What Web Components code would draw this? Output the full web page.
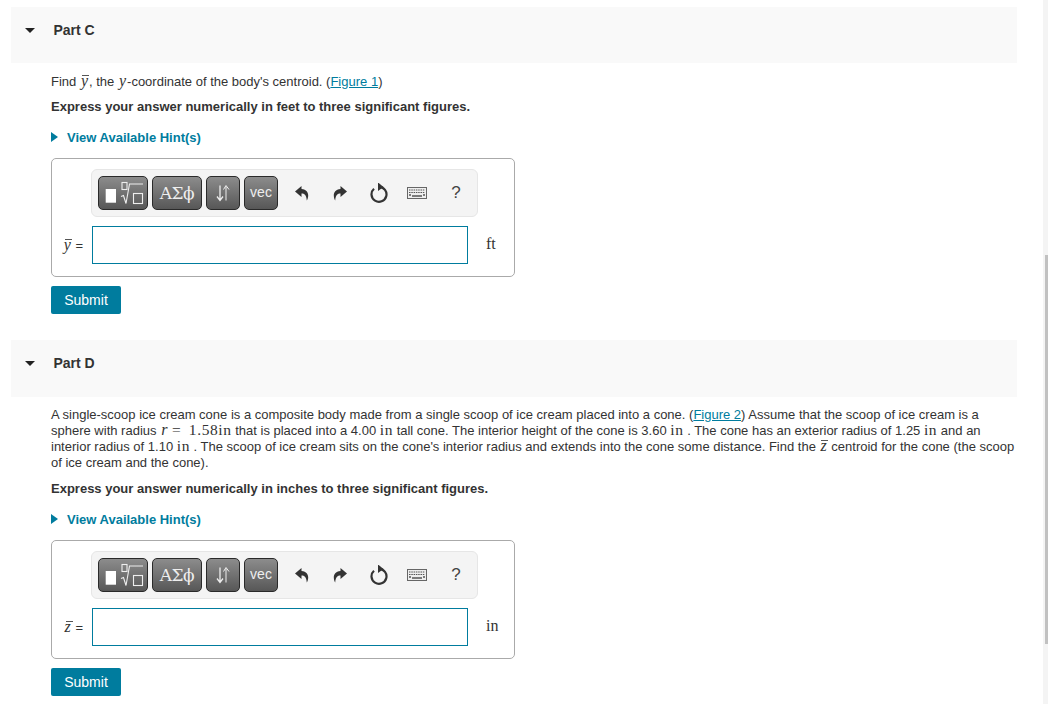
<!DOCTYPE html>
<html>
<head>
<meta charset="utf-8">
<title>Parts</title>
<style>
  html, body { margin: 0; height: 704px; overflow: hidden; background: #fff; }
  body { font-family: "Liberation Sans", Arial, sans-serif; font-size: 13px; color: #333; }
  .page { height: 704px; padding: 7px 0 0 11px; box-sizing: border-box; }
  m-i { font-family: "Liberation Serif", serif; font-style: italic; font-size: 16px; line-height: 0; padding: 0 1px; }
  a { color: #007c9e; }
  .q { line-height: 16px; margin-bottom: 10px; }
</style>
</head>
<body>
<page-scrollbar></page-scrollbar>
<div class="page">
  <part-section name="Part C" style="--gap-after: 26px">
    <div slot="question" class="q" style="margin-bottom:9px">Find <bar-var>y</bar-var>, the <m-i>y</m-i>-coordinate of the body's centroid. (<a href="#">Figure 1</a>)</div>
    <span slot="instruction">Express your answer numerically in feet to three significant figures.</span>
    <bar-var slot="var">y</bar-var>
    <span slot="unit">ft</span>
  </part-section>
  <part-section name="Part D" style="--band-h: 57px; --body-top: 10px">
    <div slot="question" class="q">A single-scoop ice cream cone is a composite body made from a single scoop of ice cream placed into a cone. (<a href="#">Figure 2</a>) Assume that the scoop of ice cream is a<br>sphere with radius <m-i>r</m-i> <unit-txt style="word-spacing:3px">= 1.58in</unit-txt> that is placed into a 4.00 <unit-txt>in</unit-txt> tall cone. The interior height of the cone is 3.60 <unit-txt>in</unit-txt> . The cone has an exterior radius of 1.25 <unit-txt>in</unit-txt> and an<br>interior radius of 1.10 <unit-txt>in</unit-txt> . The scoop of ice cream sits on the cone's interior radius and extends into the cone some distance. Find the <bar-var>z</bar-var> centroid for the cone (the scoop<br>of ice cream and the cone).</div>
    <span slot="instruction">Express your answer numerically in inches to three significant figures.</span>
    <bar-var slot="var">z</bar-var>
    <span slot="unit">in</span>
  </part-section>
</div>

<script>
function define(name, html) {
  customElements.define(name, class extends HTMLElement {
    constructor() {
      super();
      this.attachShadow({ mode: 'open' }).innerHTML = html;
    }
  });
}

// The bar is laid over the letter, it takes no room of its own.
define('bar-var', `
  <style>
    :host { display: inline; position: relative; line-height: 0; font-family: "Liberation Serif", serif; font-style: italic; font-size: 16px; padding: 0 1px; }
    i { position: absolute; left: 2px; width: 7px; top: 3px; height: 1px; background: #555; }
  </style>
  <i></i><slot></slot>`);

define('unit-txt', `
  <style>
    :host { display: inline; font-family: "Liberation Serif", serif; font-size: 15.5px; letter-spacing: .6px; line-height: 0; }
  </style>
  <slot></slot>`);

define('page-scrollbar', `
  <style>
    :host { position: fixed; top: 0; right: 0; width: 5px; height: 704px; background: #f4f4f4; }
    div { position: absolute; top: 255px; left: 2px; right: 0; height: 389px; background: #c1c1c1; }
  </style>
  <div></div>`);

define('hint-link', `
  <style>
    :host { display: flex; align-items: center; gap: 9px; height: 16px; color: #007c9e; font-weight: bold; }
    i { width: 0; height: 0; border-left: 7px solid #007c9e; border-top: 5px solid transparent; border-bottom: 5px solid transparent; }
  </style>
  <i></i><span>View Available Hint(s)</span>`);

define('submit-button', `
  <style>
    :host { display: inline-flex; align-items: center; justify-content: center; width: 70px; height: 28px; background: #007c9e; color: #fff; font-size: 14px; border-radius: 2px; }
  </style>
  <span>Submit</span>`);

define('math-toolbar', `
  <style>
    :host { display: flex; align-items: center; box-sizing: border-box; width: 387px; height: 48px; padding-left: 6px; background: #f4f4f4; border: 1px solid #e6e6e6; border-radius: 6px; }
    .k { display: flex; align-items: center; justify-content: center; box-sizing: border-box; height: 34px; border: 1px solid #2a2a2a; border-radius: 5px; background: linear-gradient(#8c8c8c, #575757); color: #eee; margin-right: 4px; }
    .tmpl { width: 50px; }
    .greek { width: 50px; font: 17px "DejaVu Serif", "Liberation Serif", serif; letter-spacing: -.5px; }
    .arrows { width: 34px; }
    .vec { width: 34px; font: 14px "Liberation Sans", sans-serif; padding-bottom: 3px; }
    svg { display: block; }
    .tool { display: flex; align-items: center; justify-content: center; color: #333; }
    .q { font-size: 17px; color: #444; }
  </style>
  <div class="k tmpl">
    <svg width="44" height="30" viewBox="0 0 44 30" fill="none" stroke="#eee" stroke-width="1.100">
      <rect x="4.700" y="11" width="10.300" height="13.700" fill="#fff" stroke="none"/>
      <rect x="21" y="4.500" width="5" height="7"/>
      <path d="M20 18.500l2.500-1 2.500 8 3.500-19.500h13.500"/>
      <rect x="32.500" y="15.500" width="9" height="10"/>
    </svg>
  </div>
  <div class="k greek">ΑΣϕ</div>
  <div class="k arrows">
    <svg width="20" height="20" viewBox="0 0 20 20" fill="none" stroke="#eee" stroke-width="1.300">
      <path d="M7 2.500v14M4 13.500l3 4 3-4"/>
      <path d="M13 17.500v-14M10.500 6.500l2.500-4 3 4" stroke-width="1"/>
    </svg>
  </div>
  <div class="k vec">vec</div>
  <div class="tool" style="width:14px;margin-left:13px">
    <svg width="14" height="16" viewBox="0 0 14 16" fill="#333"><path d="M6.500 1L0 6.500l6.500 5.500V8.500c3 0 4.800 1.500 5.300 7 2.200-4 2.700-10.500-5.300-11.500z"/></svg>
  </div>
  <div class="tool" style="width:14px;margin-left:24px">
    <svg width="14" height="16" viewBox="0 0 14 16" fill="#333"><path d="M7.500 1L14 6.500 7.500 12V8.500c-3 0-4.800 1.500-5.300 7C0 11.500-.5 5 7.500 4z"/></svg>
  </div>
  <div class="tool" style="width:18px;margin-left:23px">
    <svg width="18" height="20" viewBox="0 0 18 20" fill="none" stroke="#333" stroke-width="2.200"><path d="M9 3.800A7.500 7.500 0 1 1 4 5.700"/><path d="M8 -.5l5.500 4.400L8 8z" fill="#333" stroke="none"/></svg>
  </div>
  <div class="tool" style="width:20px;margin-left:19px">
    <svg width="20" height="12" viewBox="0 0 20 12"><rect x=".5" y=".5" width="19" height="11" fill="#eee" stroke="#666"/><path d="M2 3h16M2 5.500h16" stroke="#555" stroke-dasharray="1.500 .8"/><path d="M2 8h2M5 9h10M16 8h2" stroke="#555" stroke-width="1.500"/></svg>
  </div>
  <div class="tool q" style="width:12px;margin-left:23px">?</div>`);

define('answer-box', `
  <style>
    :host { display: grid; grid-template-columns: 40px 376px 1fr; grid-template-rows: 48px 38px; row-gap: 9px; align-items: center; box-sizing: border-box; width: 464px; height: 119px; padding-top: 10px; background: #fff; border: 1px solid #aaa; border-radius: 5px; }
    .tb { grid-column: 2 / 4; margin-left: -1px; }
    .lbl { text-align: right; padding-right: 9px; white-space: nowrap; font-size: 13px; }
    .field { box-sizing: border-box; height: 38px; border: 1px solid #007c9e; background: #fff; }
    .unit { padding: 0 0 3px 18px; font: 16px "Liberation Serif", serif; color: #333; }
  </style>
  <div></div>
  <div class="tb"><math-toolbar></math-toolbar></div>
  <div class="lbl"><slot name="var"></slot> =</div>
  <div class="field"></div>
  <div class="unit"><slot name="unit"></slot></div>`);

define('part-section', `
  <style>
    :host { display: block; width: 1006px; margin-bottom: var(--gap-after, 0); }
    .band { display: flex; align-items: flex-start; box-sizing: border-box; height: var(--band-h, 56px); padding: 15px 0 0 14px; background: #f9f9f9; color: #333; font-weight: bold; font-size: 14px; line-height: 16px; }
    .band i { width: 0; height: 0; margin: 6px 18.500px 0 0; border-top: 5px solid #222; border-left: 5px solid transparent; border-right: 5px solid transparent; }
    .body { padding: var(--body-top, 11px) 0 0 40px; }
    .instr { font-weight: bold; line-height: 16px; }
    hint-link { margin-top: 14px; }
    answer-box { margin-top: 13px; }
    submit-button { margin-top: 9px; }
  </style>
  <div class="band"><i></i><span id="n"></span></div>
  <div class="body">
    <slot name="question"></slot>
    <div class="instr"><slot name="instruction"></slot></div>
    <hint-link></hint-link>
    <answer-box><slot name="var" slot="var"></slot><slot name="unit" slot="unit"></slot></answer-box>
    <submit-button></submit-button>
  </div>`);

document.querySelectorAll('part-section').forEach(p => {
  p.shadowRoot.getElementById('n').textContent = p.getAttribute('name');
});
</script>
</body>
</html>
